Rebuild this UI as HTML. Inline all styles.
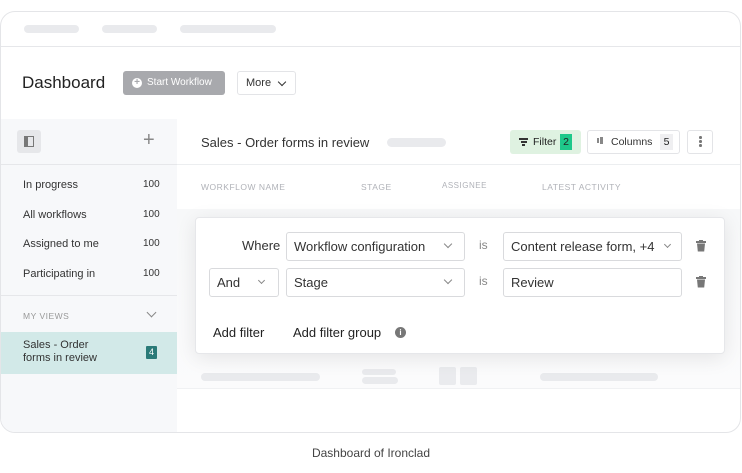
<!DOCTYPE html>
<html><head><style>
*{margin:0;padding:0;box-sizing:border-box}
body{width:742px;height:473px;background:#fff;font-family:"Liberation Sans",sans-serif;position:relative;overflow:hidden;color:#222}
.a{position:absolute}
.pill{position:absolute;background:#e9eaed;border-radius:5px;height:8px}
.card{position:absolute;left:0;top:11px;width:741px;height:422px;border:1px solid #e4e5e8;border-radius:15px;overflow:hidden;background:#fff}
.sb{font-size:11px;color:#333}
.n{font-size:10px;color:#333}
.hdr{font-size:8.5px;color:#b0b2b8;letter-spacing:.5px}
.box{position:absolute;border:1px solid #d9dadd;border-radius:3px;background:#fff;font-size:13px;color:#333;padding-left:7px;line-height:27px}
.chev{position:absolute;width:6px;height:6px;border-right:1.3px solid #888;border-bottom:1.3px solid #888;transform:rotate(45deg)}
</style></head><body>
<div class="card">
 <div class="pill" style="left:23px;top:13px;width:55px"></div>
 <div class="pill" style="left:101px;top:13px;width:55px"></div>
 <div class="pill" style="left:179px;top:13px;width:96px"></div>
 <div class="a" style="left:0;top:34px;width:740px;height:1px;background:#e6e7ea"></div>
 <div class="a" style="left:21px;top:61px;font-size:17px;color:#222">Dashboard</div>
 <div class="a" style="left:122px;top:59px;width:102px;height:24px;background:#a8a9ad;border-radius:3px;color:#fff;font-size:10px;padding:6px 0 0 24px">Start Workflow</div>
 <div class="a" style="left:131px;top:66px;width:10px;height:10px;border-radius:50%;background:#fff;color:#a8a9ad;font-size:10px;line-height:10px;text-align:center;font-weight:bold">+</div>
 <div class="a" style="left:236px;top:59px;width:59px;height:24px;border:1px solid #e3e4e7;border-radius:3px;font-size:11px;line-height:22px;padding-left:8px;color:#333">More</div>
 <div class="chev" style="left:278px;top:67px;border-color:#333"></div>
 <div class="a" style="left:0;top:107px;width:176px;height:315px;background:#f7f8fa"></div>
 <div class="a" style="left:16px;top:118px;width:24px;height:23px;background:#e6e7ea;border-radius:3px"></div>
 <div class="a" style="left:23px;top:124px;width:10px;height:11px;border:1.5px solid #777;border-left-width:4px"></div>
 <div class="a" style="left:142px;top:117px;font-size:20px;color:#888;font-weight:300">+</div>
 <div class="a" style="left:0;top:152px;width:176px;height:1px;background:#e6e7ea"></div>
 <div class="a sb" style="left:22px;top:167px">In progress</div><div class="a n" style="left:142px;top:167px">100</div>
 <div class="a sb" style="left:22px;top:197px">All workflows</div><div class="a n" style="left:142px;top:197px">100</div>
 <div class="a sb" style="left:22px;top:226px">Assigned to me</div><div class="a n" style="left:142px;top:226px">100</div>
 <div class="a sb" style="left:22px;top:256px">Participating in</div><div class="a n" style="left:142px;top:256px">100</div>
 <div class="a" style="left:0;top:283px;width:176px;height:1px;background:#e6e7ea"></div>
 <div class="a hdr" style="left:22px;top:299px;color:#999">MY VIEWS</div>
 <div class="chev" style="left:147px;top:297px;width:7px;height:7px"></div>
 <div class="a" style="left:0;top:320px;width:176px;height:42px;background:#d2e9e8"></div>
 <div class="a sb" style="left:22px;top:327px;line-height:13px">Sales - Order<br>forms in review</div>
 <div class="a" style="left:145px;top:334px;width:11px;height:13px;background:#2a7a78;color:#fff;font-size:9px;text-align:center;line-height:13px;border-radius:1px">4</div>
 <div class="a" style="left:200px;top:123px;font-size:13px;color:#333">Sales - Order forms in review</div>
 <div class="pill" style="left:386px;top:126px;width:59px;height:9px"></div>
 <div class="a" style="left:509px;top:118px;width:71px;height:24px;background:#dff2e1;border-radius:3px;font-size:10.5px;line-height:24px;padding-left:23px;color:#222">Filter</div>
 <div class="a" style="left:518px;top:126px;width:9px;height:1.5px;background:#333"></div>
 <div class="a" style="left:519.5px;top:129px;width:6px;height:1.5px;background:#333"></div>
 <div class="a" style="left:521px;top:132px;width:3px;height:1.5px;background:#333"></div>
 <div class="a" style="left:559px;top:122px;width:12px;height:16px;background:#1ec88a;font-size:10.5px;text-align:center;line-height:16px;color:#222">2</div>
 <div class="a" style="left:586px;top:118px;width:93px;height:24px;border:1px solid #e3e4e7;border-radius:3px;font-size:10.5px;line-height:22px;padding-left:23px;color:#333">Columns</div>
 <div class="a" style="left:596px;top:126px;width:2px;height:5px;background:#888"></div><div class="a" style="left:599px;top:125px;width:3px;height:7px;background:#888"></div>
 <div class="a" style="left:659px;top:122px;width:13px;height:16px;background:#efeff1;font-size:10.5px;text-align:center;line-height:16px">5</div>
 <div class="a" style="left:686px;top:118px;width:26px;height:24px;border:1px solid #e3e4e7;border-radius:3px"></div>
 <div class="a" style="left:698px;top:124px;width:2.5px;height:2.5px;background:#777;border-radius:50%;box-shadow:0 4px 0 #777,0 8px 0 #777"></div>
 <div class="a" style="left:176px;top:152px;width:564px;height:1px;background:#eceef0"></div>
 <div class="a hdr" style="left:200px;top:170px">WORKFLOW NAME</div>
 <div class="a hdr" style="left:360px;top:170px">STAGE</div>
 <div class="a hdr" style="left:441px;top:169px;font-size:8px">ASSIGNEE</div>
 <div class="a hdr" style="left:541px;top:170px">LATEST ACTIVITY</div>
 <div class="a" style="left:176px;top:197px;width:564px;height:180px;background:linear-gradient(#f7f8f9,#fbfbfc)"></div>
 <div class="pill" style="left:200px;top:361px;width:119px;height:8px"></div>
 <div class="pill" style="left:361px;top:357px;width:34px;height:6px"></div>
 <div class="pill" style="left:361px;top:365px;width:36px;height:7px"></div>
 <div class="a" style="left:438px;top:355px;width:17px;height:18px;background:#eaebee;border-radius:2px"></div>
 <div class="a" style="left:459px;top:355px;width:17px;height:18px;background:#eaebee;border-radius:2px"></div>
 <div class="pill" style="left:539px;top:361px;width:118px;height:8px"></div>
 <div class="a" style="left:176px;top:376px;width:564px;height:1px;background:#f0f1f3"></div>
</div>
<div class="a" style="left:195px;top:217px;width:530px;height:137px;background:#fff;border:1px solid #e6e7ea;border-radius:4px;box-shadow:0 4px 20px rgba(0,0,0,.09)"></div>
<div class="a" style="left:242px;top:238px;font-size:13px;color:#333">Where</div>
<div class="box" style="left:286px;top:232px;width:179px;height:29px">Workflow configuration</div>
<div class="chev" style="left:445px;top:241px"></div>
<div class="a" style="left:479px;top:238px;font-size:12px;color:#888">is</div>
<div class="box" style="left:503px;top:232px;width:179px;height:29px">Content release form, +4</div>
<div class="chev" style="left:665px;top:242px;width:5px;height:5px"></div>
<div class="box" style="left:209px;top:268px;width:70px;height:29px">And</div>
<div class="chev" style="left:259px;top:278px;width:5px;height:5px"></div>
<div class="box" style="left:286px;top:268px;width:179px;height:29px">Stage</div>
<div class="chev" style="left:445px;top:277px"></div>
<div class="a" style="left:479px;top:274px;font-size:12px;color:#888">is</div>
<div class="box" style="left:503px;top:268px;width:179px;height:29px">Review</div>
<svg class="a" style="left:696px;top:240px" width="10" height="12" viewBox="0 0 10 12"><rect x="0" y="1" width="10" height="2" fill="#777"/><rect x="3" y="0" width="4" height="2" fill="#777"/><path d="M1 3.5h8l-.8 8H1.8z" fill="#777"/></svg>
<svg class="a" style="left:696px;top:276px" width="10" height="12" viewBox="0 0 10 12"><rect x="0" y="1" width="10" height="2" fill="#777"/><rect x="3" y="0" width="4" height="2" fill="#777"/><path d="M1 3.5h8l-.8 8H1.8z" fill="#777"/></svg>
<div class="a" style="left:213px;top:325px;font-size:13px;color:#222">Add filter</div>
<div class="a" style="left:293px;top:325px;font-size:13px;color:#222">Add filter group</div>
<div class="a" style="left:395px;top:327px;width:11px;height:11px;border-radius:50%;background:#777;color:#fff;font-size:8px;font-weight:bold;text-align:center;line-height:11px">i</div>
<div class="a" style="left:0;top:446px;width:742px;text-align:center;font-size:12px;color:#444">Dashboard of Ironclad</div>
</body></html>
